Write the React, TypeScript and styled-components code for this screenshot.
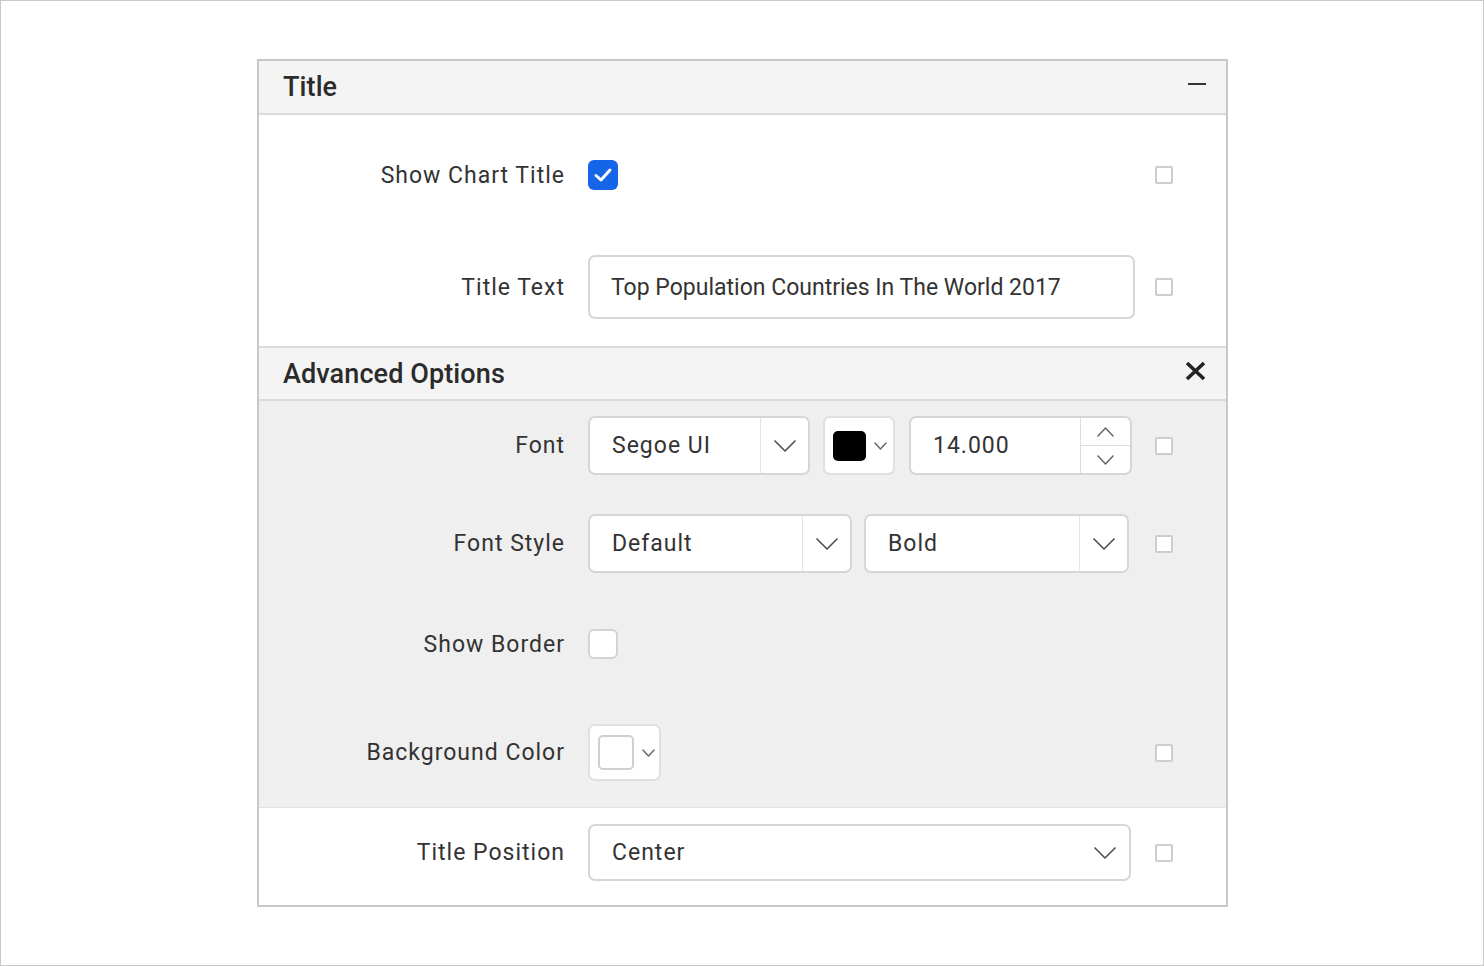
import React from "react";
import styled, { createGlobalStyle } from "styled-components";

const Global = createGlobalStyle`
  html, body { margin: 0; padding: 0; background: #ffffff; }
  body { font-family: Roboto, "Liberation Sans", Arial, sans-serif; color: #333333; }
  * { box-sizing: border-box; }
`;

const Page = styled.div`
  width: 1484px;
  height: 966px;
  border: 1px solid #c9c9c9;
  padding: 58px 0 0 256px;
  background: #ffffff;
`;

const Panel = styled.div`
  width: 971px;
  border: 2px solid #c8c8c8;
  background: #ffffff;
  display: flex;
  flex-direction: column;
`;

const Header = styled.div<{ $top?: boolean }>`
  height: ${(p) => (p.$top ? "54px" : "55px")};
  background: #f4f4f4;
  border-bottom: 2px solid #dadada;
  border-top: ${(p) => (p.$top ? "none" : "2px solid #dadada")};
  display: flex;
  align-items: center;
  justify-content: space-between;
  padding: 0 20px 0 24px;
`;

const HeaderTitle = styled.div`
  font-size: 27px;
  font-weight: 500;
  color: #2b2b2b;
  letter-spacing: 0.1px;
`;

const HeaderIcon = styled.div`
  display: flex;
  align-items: center;
  margin-bottom: 6px;
`;

const Section = styled.div<{ $gray?: boolean; $ruled?: boolean }>`
  background: ${(p) => (p.$gray ? "#efeff0" : "#ffffff")};
  border-top: ${(p) => (p.$ruled ? "1px solid #e2e2e2" : "none")};
  display: flex;
  flex-direction: column;
`;

const Row = styled.div<{ $h: number; $mt: number }>`
  display: flex;
  align-items: center;
  height: ${(p) => p.$h}px;
  margin-top: ${(p) => p.$mt}px;
`;

const SectionEnd = styled.div<{ $h: number }>`
  height: ${(p) => p.$h}px;
`;

const Label = styled.div`
  width: 306px;
  text-align: right;
  font-size: 23px;
  letter-spacing: 1px;
  color: #333333;
  margin-right: 23px;
  white-space: nowrap;
`;

const ControlCol = styled.div`
  width: 547px;
  display: flex;
  align-items: center;
`;

const Spacer = styled.div<{ $w: number }>`
  width: ${(p) => p.$w}px;
  flex: none;
`;

const SideBox = styled.div`
  width: 18px;
  height: 18px;
  margin-left: 20px;
  border: 2px solid #cdcdcd;
  border-radius: 2px;
  background: #ffffff;
`;

const CheckBox = styled.div<{ $checked?: boolean }>`
  width: 30px;
  height: 30px;
  border-radius: 6px;
  background: ${(p) => (p.$checked ? "#1565e8" : "#ffffff")};
  border: ${(p) => (p.$checked ? "none" : "2px solid #d3d3d3")};
  display: flex;
  align-items: center;
  justify-content: center;
`;

const TextInput = styled.div`
  width: 547px;
  height: 64px;
  border: 2px solid #d6d6d6;
  border-radius: 7px;
  background: #ffffff;
  display: flex;
  align-items: center;
  padding-left: 21px;
  font-size: 23px;
  color: #333333;
`;

const Select = styled.div<{ $w: number; $h?: number }>`
  width: ${(p) => p.$w}px;
  height: ${(p) => p.$h ?? 59}px;
  border: 2px solid #d6d6d6;
  border-radius: 7px;
  background: #ffffff;
  display: flex;
  flex: none;
  overflow: hidden;
`;

const SelectValue = styled.div`
  flex: 1;
  display: flex;
  align-items: center;
  padding-left: 22px;
  font-size: 23px;
  letter-spacing: 1px;
  color: #333333;
`;

const SelectArrow = styled.div<{ $divider?: boolean }>`
  width: 48px;
  display: flex;
  align-items: center;
  justify-content: center;
  border-left: ${(p) => (p.$divider ? "1px solid #e4e4e4" : "none")};
`;

const ColorPicker = styled.div<{ $w: number; $h: number }>`
  width: ${(p) => p.$w}px;
  height: ${(p) => p.$h}px;
  border: 2px solid #e0e0e0;
  border-radius: 7px;
  background: #ffffff;
  display: flex;
  align-items: center;
  padding-left: 8px;
  gap: 8px;
  flex: none;
`;

const Swatch = styled.div<{ $color: string; $w: number; $h: number }>`
  width: ${(p) => p.$w}px;
  height: ${(p) => p.$h}px;
  border-radius: 5px;
  background: ${(p) => p.$color};
  border: ${(p) => (p.$color === "#ffffff" ? "2px solid #cfcfcf" : "none")};
`;

const Numeric = styled.div`
  width: 223px;
  height: 59px;
  border: 2px solid #d6d6d6;
  border-radius: 7px;
  background: #ffffff;
  display: flex;
  overflow: hidden;
  flex: none;
`;

const SpinCol = styled.div`
  width: 50px;
  border-left: 1px solid #dedede;
  display: flex;
  flex-direction: column;
`;

const SpinBtn = styled.div<{ $top?: boolean }>`
  flex: 1;
  display: flex;
  align-items: center;
  justify-content: center;
  border-bottom: ${(p) => (p.$top ? "1px solid #dedede" : "none")};
`;

const Chevron = ({ w = 22, h = 12, up = false, color = "#555555", sw = 1.7 }: { w?: number; h?: number; up?: boolean; color?: string; sw?: number }) => (
  <svg width={w} height={h} viewBox={`0 0 ${w} ${h}`} fill="none">
    <path
      d={up ? `M1 ${h - 1} L${w / 2} 1 L${w - 1} ${h - 1}` : `M1 1 L${w / 2} ${h - 1} L${w - 1} 1`}
      stroke={color}
      strokeWidth={sw}
      strokeLinecap="round"
      strokeLinejoin="round"
    />
  </svg>
);

const Minus = () => (
  <svg width="18" height="4" viewBox="0 0 18 4">
    <rect x="0" y="1" width="18" height="2" fill="#333333" />
  </svg>
);

const Close = () => (
  <svg width="21" height="20" viewBox="0 0 21 20">
    <path d="M2 2 L19 18 M19 2 L2 18" stroke="#222222" strokeWidth="3.6" strokeLinecap="butt" />
  </svg>
);

const Check = () => (
  <svg width="20" height="16" viewBox="0 0 20 16">
    <path d="M3 8.5 L8 13 L17 3" stroke="#ffffff" strokeWidth="3" fill="none" strokeLinecap="round" strokeLinejoin="round" />
  </svg>
);

export default function App() {
  return (
    <>
      <Global />
      <Page>
        <Panel>
          <Header $top>
            <HeaderTitle>Title</HeaderTitle>
            <HeaderIcon>
              <Minus />
            </HeaderIcon>
          </Header>
          <Section>
            <Row $h={64} $mt={28}>
              <Label>Show Chart Title</Label>
              <ControlCol>
                <CheckBox $checked>
                  <Check />
                </CheckBox>
              </ControlCol>
              <SideBox />
            </Row>
            <Row $h={64} $mt={48}>
              <Label>Title Text</Label>
              <ControlCol>
                <TextInput>Top Population Countries In The World 2017</TextInput>
              </ControlCol>
              <SideBox />
            </Row>
            <SectionEnd $h={27} />
          </Section>
          <Header>
            <HeaderTitle>Advanced Options</HeaderTitle>
            <HeaderIcon>
              <Close />
            </HeaderIcon>
          </Header>
          <Section $gray>
            <Row $h={59} $mt={15}>
              <Label>Font</Label>
              <ControlCol>
                <Select $w={222}>
                  <SelectValue>Segoe UI</SelectValue>
                  <SelectArrow $divider>
                    <Chevron />
                  </SelectArrow>
                </Select>
                <Spacer $w={13} />
                <ColorPicker $w={72} $h={59}>
                  <Swatch $color="#000000" $w={33} $h={30} />
                  <Chevron w={13} h={8} color="#666666" sw={1.4} />
                </ColorPicker>
                <Spacer $w={14} />
                <Numeric>
                  <SelectValue>14.000</SelectValue>
                  <SpinCol>
                    <SpinBtn $top>
                      <Chevron w={17} h={10} up color="#666666" sw={1.5} />
                    </SpinBtn>
                    <SpinBtn>
                      <Chevron w={17} h={10} color="#666666" sw={1.5} />
                    </SpinBtn>
                  </SpinCol>
                </Numeric>
              </ControlCol>
              <SideBox />
            </Row>
            <Row $h={59} $mt={39}>
              <Label>Font Style</Label>
              <ControlCol>
                <Select $w={264}>
                  <SelectValue>Default</SelectValue>
                  <SelectArrow $divider>
                    <Chevron />
                  </SelectArrow>
                </Select>
                <Spacer $w={12} />
                <Select $w={265}>
                  <SelectValue>Bold</SelectValue>
                  <SelectArrow $divider>
                    <Chevron />
                  </SelectArrow>
                </Select>
              </ControlCol>
              <SideBox />
            </Row>
            <Row $h={58} $mt={42}>
              <Label>Show Border</Label>
              <ControlCol>
                <CheckBox />
              </ControlCol>
            </Row>
            <Row $h={57} $mt={51}>
              <Label>Background Color</Label>
              <ControlCol>
                <ColorPicker $w={73} $h={57}>
                  <Swatch $color="#ffffff" $w={36} $h={35} />
                  <Chevron w={13} h={8} color="#666666" sw={1.4} />
                </ColorPicker>
              </ControlCol>
              <SideBox />
            </Row>
            <SectionEnd $h={26} />
          </Section>
          <Section $ruled>
            <Row $h={57} $mt={16}>
              <Label>Title Position</Label>
              <ControlCol>
                <Select $w={543} $h={57}>
                  <SelectValue>Center</SelectValue>
                  <SelectArrow>
                    <Chevron />
                  </SelectArrow>
                </Select>
              </ControlCol>
              <SideBox />
            </Row>
            <SectionEnd $h={24} />
          </Section>
        </Panel>
      </Page>
    </>
  );
}
